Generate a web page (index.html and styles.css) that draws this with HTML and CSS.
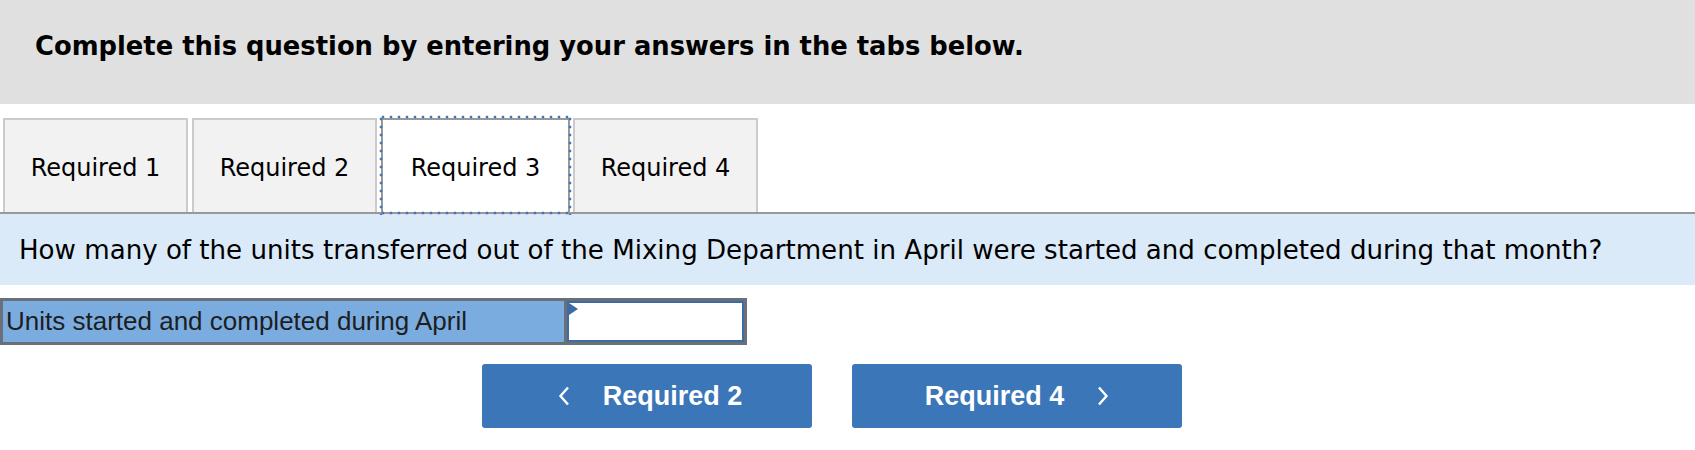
FILE: index.html
```html
<!DOCTYPE html>
<html>
<head>
<meta charset="utf-8">
<link rel="stylesheet" href="styles.css">
</head>
<body>
<div class="header">Complete this question by entering your answers in the tabs below.</div>
<div class="tabs">
  <div class="tab">Required 1</div>
  <div class="tab">Required 2</div>
  <div class="tab active">Required 3</div>
  <div class="tab">Required 4</div>
</div>
<div class="question">How many of the units transferred out of the Mixing Department in April were started and completed during that month?</div>
<div class="answer">
  <div class="label">Units started and completed during April</div>
  <div class="input"><span class="flag"></span></div>
</div>
<div class="nav">
  <div class="btn prev"><svg class="chev" width="12" height="20" viewBox="0 0 12 20"><polyline points="10,1.5 2.5,10 10,18.5" fill="none" stroke="#fff" stroke-width="2.4"/></svg><span>Required 2</span></div>
  <div class="btn next"><span>Required 4</span><svg class="chev" width="12" height="20" viewBox="0 0 12 20"><polyline points="2,1.5 9.5,10 2,18.5" fill="none" stroke="#fff" stroke-width="2.4"/></svg></div>
</div>
</body>
</html>
```
FILE: styles.css
```css
html, body { margin: 0; padding: 0; background: #fff; }
body { font-family: "DejaVu Sans", Verdana, sans-serif; color: #000; }
.header {
  background: #e0e0e0;
  height: 104px;
  box-sizing: border-box;
  padding: 31px 0 0 35px;
  font-weight: bold;
  font-size: 25.8px;
  line-height: 30px;
}
.tabs {
  margin-top: 14px;
  padding-left: 3px;
  display: flex;
  align-items: flex-end;
  border-bottom: 2px solid #999;
}
.tab {
  box-sizing: border-box;
  width: 185px;
  height: 94px;
  margin-right: 4px;
  padding-top: 4px;
  border: 2px solid #cbcbcb;
  border-bottom: none;
  background: #f2f2f2;
  display: flex;
  align-items: center;
  justify-content: center;
  font-size: 24px;
}
.tab.active {
  position: relative;
  width: 189px;
  background: #fff;
  border-color: #999;
  margin-right: 3px;
}
.tab.active::before {
  content: "";
  position: absolute;
  left: -4px;
  right: -4px;
  top: -5px;
  bottom: -3px;
  pointer-events: none;
  background:
    radial-gradient(circle, #3f78b8 1.2px, transparent 1.7px) left top / 8px 4px repeat-x,
    radial-gradient(circle, #3f78b8 1.2px, transparent 1.7px) left bottom / 8px 4px repeat-x,
    radial-gradient(circle, #3f78b8 1.2px, transparent 1.7px) left top / 4px 8px repeat-y,
    radial-gradient(circle, #3f78b8 1.2px, transparent 1.7px) right top / 4px 8px repeat-y;
}
.question {
  background: #dbeaf8;
  height: 71px;
  box-sizing: border-box;
  padding-left: 19px;
  display: flex;
  align-items: center;
  font-size: 26.1px;
}
.answer {
  margin-top: 13px;
  width: 747px;
  height: 47px;
  box-sizing: border-box;
  border: 3px solid #6b7078;
  display: flex;
  font-family: "Liberation Sans", Arial, sans-serif;
}
.label {
  width: 558px;
  background: #7aace0;
  display: flex;
  align-items: center;
  padding-left: 3px;
  font-size: 26px;
  color: #1e1e1e;
  border-right: 3px solid #6b7078;
}
.input {
  flex: 1;
  position: relative;
  background: #fff;
  border: 2px solid #3e6ba6;
}
.flag {
  position: absolute;
  left: 0;
  top: 0;
  width: 0;
  height: 0;
  border-top: 6px solid transparent;
  border-bottom: 6px solid transparent;
  border-left: 9px solid #3e6ba6;
}
.nav {
  margin-top: 19px;
  margin-left: 482px;
  display: flex;
  gap: 40px;
}
.btn {
  box-sizing: border-box;
  width: 330px;
  height: 64px;
  background: #3a76b8;
  border-radius: 3px;
  color: #fff;
  font-family: "Liberation Sans", Arial, sans-serif;
  font-weight: bold;
  font-size: 27px;
  display: flex;
  align-items: center;
  justify-content: center;
}
.btn.prev { gap: 33px; padding-left: 6px; }
.btn.next { gap: 33px; }
.chev { display: block; }
```
